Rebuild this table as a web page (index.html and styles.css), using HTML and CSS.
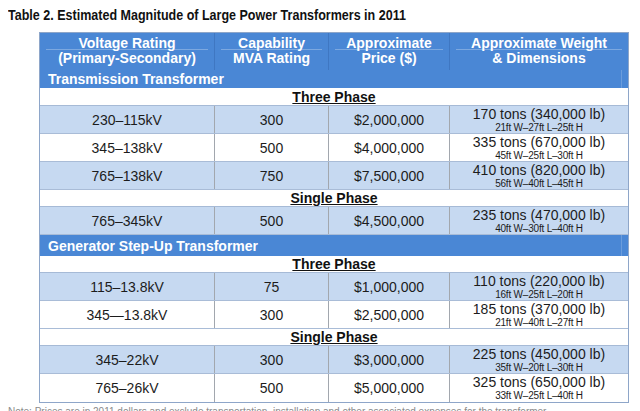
FILE: index.html
```html
<!DOCTYPE html>
<html>
<head>
<meta charset="utf-8">
<link rel="stylesheet" href="styles.css">
</head>
<body>
<div class="title"><span>Table 2. Estimated Magnitude of Large Power Transformers in 2011</span></div>
<div class="tbl">
  <div class="row head">
    <div class="hc"><div class="l1">Voltage Rating</div><div class="l2">(Primary-Secondary)</div></div>
    <div class="hc"><div class="l1">Capability</div><div class="l2">MVA Rating</div></div>
    <div class="hc"><div class="l1">Approximate</div><div class="l2">Price ($)</div></div>
    <div class="hc"><div class="l1">Approximate Weight</div><div class="l2">&amp; Dimensions</div></div>
  </div>
  <div class="section">Transmission Transformer</div>
  <div class="phase"><span>Three Phase</span></div>
  <div class="row data alt">
    <div class="c">230–115kV</div><div class="c">300</div><div class="c">$2,000,000</div>
    <div class="c w"><div class="wt">170 tons (340,000 lb)</div><div class="dim">21ft W–27ft L–25ft H</div></div>
  </div>
  <div class="row data">
    <div class="c">345–138kV</div><div class="c">500</div><div class="c">$4,000,000</div>
    <div class="c w"><div class="wt">335 tons (670,000 lb)</div><div class="dim">45ft W–25ft L–30ft H</div></div>
  </div>
  <div class="row data alt">
    <div class="c">765–138kV</div><div class="c">750</div><div class="c">$7,500,000</div>
    <div class="c w"><div class="wt">410 tons (820,000 lb)</div><div class="dim">56ft W–40ft L–45ft H</div></div>
  </div>
  <div class="phase short"><span>Single Phase</span></div>
  <div class="row data alt">
    <div class="c">765–345kV</div><div class="c">500</div><div class="c">$4,500,000</div>
    <div class="c w"><div class="wt">235 tons (470,000 lb)</div><div class="dim">40ft W–30ft L–40ft H</div></div>
  </div>
  <div class="section gen">Generator Step-Up Transformer</div>
  <div class="phase short"><span>Three Phase</span></div>
  <div class="row data alt">
    <div class="c">115–13.8kV</div><div class="c">75</div><div class="c">$1,000,000</div>
    <div class="c w"><div class="wt">110 tons (220,000 lb)</div><div class="dim">16ft W–25ft L–20ft H</div></div>
  </div>
  <div class="row data">
    <div class="c">345—13.8kV</div><div class="c">300</div><div class="c">$2,500,000</div>
    <div class="c w"><div class="wt">185 tons (370,000 lb)</div><div class="dim">21ft W–40ft L–27ft H</div></div>
  </div>
  <div class="phase short"><span>Single Phase</span></div>
  <div class="row data alt">
    <div class="c">345–22kV</div><div class="c">300</div><div class="c">$3,000,000</div>
    <div class="c w"><div class="wt">225 tons (450,000 lb)</div><div class="dim">35ft W–20ft L–30ft H</div></div>
  </div>
  <div class="row data last">
    <div class="c">765–26kV</div><div class="c">500</div><div class="c">$5,000,000</div>
    <div class="c w"><div class="wt">325 tons (650,000 lb)</div><div class="dim">33ft W–25ft L–40ft H</div></div>
  </div>
</div>
<p class="note">Note: Prices are in 2011 dollars and exclude transportation, installation and other associated expenses for the transformer.</p>
</body>
</html>
```
FILE: styles.css
```css
html, body {
  margin: 0;
  padding: 0;
}
body {
  width: 640px;
  height: 411px;
  overflow: hidden;
  background: #ffffff;
  font-family: "Liberation Sans", Arial, sans-serif;
  color: #1c1c1c;
}
.title {
  height: 32px;
  box-sizing: border-box;
  padding: 7px 0 0 8px;
  font-size: 15px;
  line-height: 15px;
  font-weight: bold;
  white-space: nowrap;
  color: #111;
}
.title span {
  display: inline-block;
  transform: scaleX(0.835);
  transform-origin: 0 0;
}
.tbl {
  margin-left: 39px;
  width: 590px;
  box-sizing: border-box;
  border: 1px solid #8ea6c9;
}
.row {
  display: grid;
  grid-template-columns: 174px 114px 121px 179px;
  box-sizing: border-box;
}
.head {
  height: 37px;
  background: #4a87d5;
  color: #ffffff;
  font-weight: bold;
  font-size: 14px;
  text-align: center;
}
.hc + .hc {
  border-left: 1px solid rgba(30, 70, 140, 0.25);
}
.hc .l1 {
  height: 17px;
  box-sizing: border-box;
  padding-top: 3px;
  line-height: 14px;
  margin: 0 6px;
  border-bottom: 1px solid rgba(255, 255, 255, 0.28);
}
.hc .l2 {
  height: 20px;
  box-sizing: border-box;
  padding-top: 1px;
  line-height: 14px;
}
.section {
  height: 18px;
  line-height: 18px;
  padding-left: 8px;
  background: #4a87d5;
  color: #ffffff;
  font-weight: bold;
  font-size: 14px;
  box-shadow: inset -6px 0 0 #4a87d5, inset -7px 0 0 rgba(255, 255, 255, 0.18);
}
.section.gen {
  height: 21px;
  box-sizing: border-box;
  padding-top: 2px;
  line-height: 19px;
}
.phase {
  height: 18px;
  box-sizing: border-box;
  line-height: 18px;
  text-align: center;
  font-weight: bold;
  font-size: 14px;
  color: #111;
  background: #ffffff;
  border-bottom: 1px solid #a6bad6;
}
.phase.short {
  height: 17px;
  line-height: 17px;
}
.phase span {
  text-decoration: underline;
}
.data {
  height: 28px;
  font-size: 14px;
  border-bottom: 1px solid #a9bcd7;
  background: #ffffff;
}
.data.alt {
  background: #c6d9f1;
}
.data.last {
  border-bottom: 0;
}
.c {
  display: flex;
  align-items: center;
  justify-content: center;
  white-space: nowrap;
}
.c + .c {
  border-left: 1px solid #a2a7ae;
}
.w {
  flex-direction: column;
}
.wt {
  line-height: 15px;
}
.dim {
  font-size: 10px;
  line-height: 11px;
  letter-spacing: -0.2px;
}
.note {
  margin: 3px 0 0 8px;
  font-size: 10px;
  line-height: 12px;
  color: #8a8a8a;
  white-space: nowrap;
}
```
